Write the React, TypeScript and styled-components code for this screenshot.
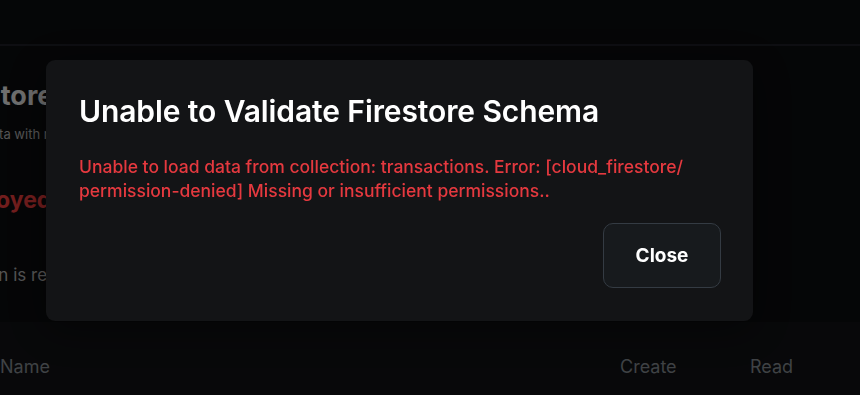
import React from 'react';
import styled, { createGlobalStyle } from 'styled-components';

const GlobalStyle = createGlobalStyle`
    html, body {
        margin: 0;
        padding: 0;
        background: #0b0c0e;
        font-family: Inter, "Open Sans", "Liberation Sans", sans-serif;
        overflow: hidden;
    }
`;

const Page = styled.div`
    width: 860px;
    height: 395px;
    background: #0b0c0e;
    display: flex;
    flex-direction: column;
    overflow: hidden;
`;
const TopBar = styled.div`
    height: 44px;
    flex-shrink: 0;
    border-bottom: 2px solid #1c1d24;
`;
const Main = styled.div`
    display: flex;
    flex-direction: column;
    margin-left: -64px;
    padding-top: 33px;
`;
const PageTitle = styled.h1`
    margin: 0;
    font-size: 27px;
    line-height: 33px;
    font-weight: 700;
    color: #dcdcdc;
    white-space: nowrap;
`;
const Hint = styled.p<{ $size?: number; $gap: number; $shift?: number }>`
    margin: ${p => p.$gap}px 0 0 ${p => p.$shift || 0}px;
    font-size: ${p => p.$size || 13}px;
    line-height: ${p => (p.$size || 13) + 4}px;
    color: #a8a8a8;
    white-space: nowrap;
`;
const Status = styled.div`
    margin: 43px 0 0 9px;
    font-size: 23px;
    line-height: 29px;
    font-weight: 700;
    color: #e53b3b;
    white-space: nowrap;
`;
const TableHead = styled.div`
    margin-top: 36px;
    height: 88px;
    padding-left: 64px;
    display: grid;
    grid-template-columns: 620px 130px 1fr;
    align-items: center;
    background: #101114;
    font-size: 18px;
    color: #7e848a;
`;

const Overlay = styled.div`
    position: fixed;
    inset: 0;
    background: rgba(0, 0, 0, 0.5);
    display: flex;
    align-items: flex-start;
    padding: 60px 0 0 46px;
`;
const Dialog = styled.div`
    width: 707px;
    height: 261px;
    box-sizing: border-box;
    padding: 32px 32px 33px 33px;
    background: #131416;
    border-radius: 9px;
    display: flex;
    flex-direction: column;
    box-shadow: 0 8px 40px rgba(0, 0, 0, 0.4);
`;
const DialogTitle = styled.h2`
    margin: 0;
    font-size: 30px;
    line-height: 38px;
    font-weight: 600;
    letter-spacing: -0.1px;
    color: #ffffff;
`;
const ErrorText = styled.p`
    margin: 25px 0 0;
    font-size: 17.5px;
    line-height: 24px;
    font-weight: 500;
    color: #e5393f;
`;
const Footer = styled.div`
    margin-top: auto;
    display: flex;
    justify-content: flex-end;
`;
const Button = styled.button`
    width: 118px;
    height: 65px;
    border-radius: 10px;
    border: 1px solid #343b43;
    background: #171a1d;
    color: #ffffff;
    font-family: inherit;
    font-size: 19px;
    font-weight: 700;
    cursor: pointer;
`;

const App = () => {
    return (
        <>
            <GlobalStyle />
            <Page>
                <TopBar />
                <Main>
                    <PageTitle>Firestore Rules</PageTitle>
                    <Hint $gap={14}>Protect data with rules</Hint>
                    <Status>Deployed</Status>
                    <Hint $gap={50} $size={17} $shift={-8}>Collection is read only</Hint>
                    <TableHead>
                        <span>Name</span>
                        <span>Create</span>
                        <span>Read</span>
                    </TableHead>
                </Main>
            </Page>
            <Overlay>
                <Dialog>
                    <DialogTitle>Unable to Validate Firestore Schema</DialogTitle>
                    <ErrorText>
                        Unable to load data from collection: transactions. Error: [cloud_firestore/<br />
                        permission-denied] Missing or insufficient permissions..
                    </ErrorText>
                    <Footer>
                        <Button>Close</Button>
                    </Footer>
                </Dialog>
            </Overlay>
        </>
    );
};

export default App;
